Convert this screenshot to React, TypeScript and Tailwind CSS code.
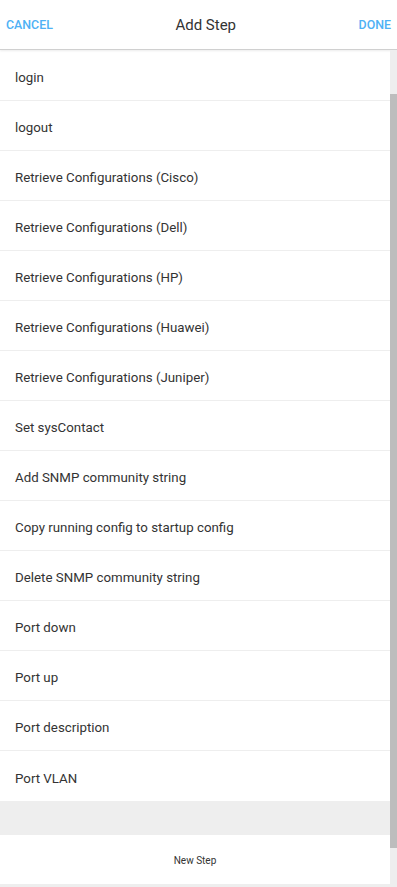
import React from 'react';

const steps: string[] = [
  'login',
  'logout',
  'Retrieve Configurations (Cisco)',
  'Retrieve Configurations (Dell)',
  'Retrieve Configurations (HP)',
  'Retrieve Configurations (Huawei)',
  'Retrieve Configurations (Juniper)',
  'Set sysContact',
  'Add SNMP community string',
  'Copy running config to startup config',
  'Delete SNMP community string',
  'Port down',
  'Port up',
  'Port description',
  'Port VLAN',
];

export default function App() {
  return (
    <div
      className="w-[397px] h-[887px] flex flex-col bg-white overflow-hidden"
      style={{ fontFamily: 'Roboto, "Liberation Sans", sans-serif' }}
    >
      {/* --- Header --- */}
      <div className="h-[50px] shrink-0 flex items-center justify-between px-[6px] pt-[2px] border-b border-[#d0d0d0] shadow-[0_1px_2px_rgba(0,0,0,0.08)]">
        <button className="text-[12.4px] font-medium text-[#4eb1f5]">CANCEL</button>
        <span className="text-[15px] text-[#333333]">Add Step</span>
        <button className="text-[12.4px] font-medium text-[#4eb1f5]">DONE</button>
      </div>

      {/* --- Body --- */}
      <div className="flex-1 flex min-h-0">
        <div className="flex-1 flex flex-col pt-[1px]">
          {steps.map((s, i) => (
            <div
              key={s}
              className={`h-[50px] shrink-0 flex items-center pl-[15px] pt-[5px] text-[13.3px] text-[#333333] ${
                i < steps.length - 1 ? 'border-b border-[#eeeeee]' : ''
              }`}
            >
              {s}
            </div>
          ))}
          <div className="h-[34px] shrink-0 bg-[#eeeeee]" />
          <div className="h-[49px] shrink-0 flex items-center justify-center pt-[2px] text-[10px] text-[#333333]">
            New Step
          </div>
          <div className="flex-1 bg-[#eeeeee]" />
        </div>

        {/* --- Scrollbar --- */}
        <div className="w-[7px] shrink-0 bg-[#eeeeee] flex flex-col">
          <div className="h-[44px] shrink-0" />
          <div className="h-[754px] shrink-0 bg-[#bdbdbd]" />
        </div>
      </div>
    </div>
  );
}
